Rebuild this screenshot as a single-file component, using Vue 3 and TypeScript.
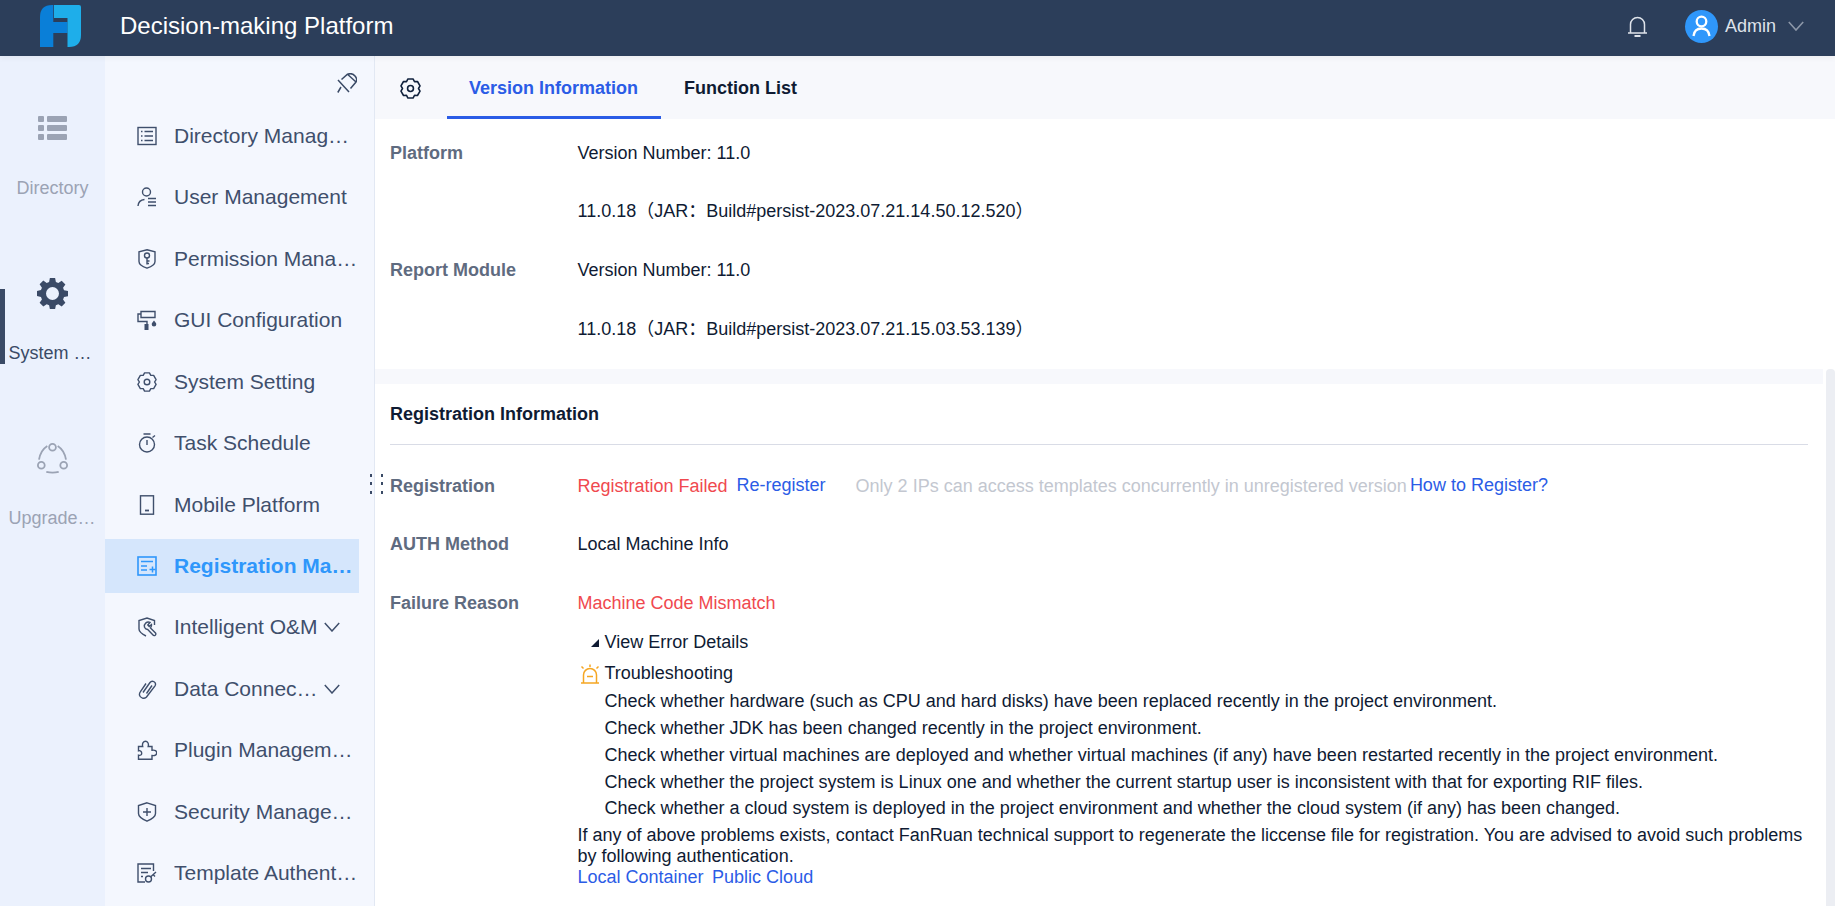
<script setup lang="ts">
interface NavItem { label: string; icon: string; active?: boolean; caret?: boolean }
const navItems: NavItem[] = [
  { label: 'Directory Management', icon: 'dir' },
  { label: 'User Management', icon: 'user' },
  { label: 'Permission Management', icon: 'perm' },
  { label: 'GUI Configuration', icon: 'gui' },
  { label: 'System Setting', icon: 'gear' },
  { label: 'Task Schedule', icon: 'timer' },
  { label: 'Mobile Platform', icon: 'mobile' },
  { label: 'Registration Management', icon: 'reg', active: true },
  { label: 'Intelligent O&M', icon: 'om', caret: true },
  { label: 'Data Connection', icon: 'clip', caret: true },
  { label: 'Plugin Management', icon: 'plugin' },
  { label: 'Security Management', icon: 'shield' },
  { label: 'Template Authentication', icon: 'tpl' },
]
const checks = [
  'Check whether hardware (such as CPU and hard disks) have been replaced recently in the project environment.',
  'Check whether JDK has been changed recently in the project environment.',
  'Check whether virtual machines are deployed and whether virtual machines (if any) have been restarted recently in the project environment.',
  'Check whether the project system is Linux one and whether the current startup user is inconsistent with that for exporting RIF files.',
  'Check whether a cloud system is deployed in the project environment and whether the cloud system (if any) has been changed.',
]
function cog(): string {
  const pts: string[] = []
  for (let i = 0; i < 6; i++) {
    const base = -90 + i * 60
    const add = (deg: number, r: number) => {
      const a = ((base + deg) * Math.PI) / 180
      pts.push(`${(10 + r * Math.cos(a)).toFixed(2)} ${(10 + r * Math.sin(a)).toFixed(2)}`)
    }
    add(-15, 9.4)
    add(15, 9.4)
    add(30, 7.6)
  }
  return 'M' + pts.join('L') + 'z'
}
const gearPath = cog()
</script>

<template>
  <div class="page">
    <header class="topbar">
      <svg class="logo" viewBox="0 0 41 42">
        <path d="M0 12Q0 0 12 0h1.300v42H0z" fill="#0a7fd8" />
        <path d="M13 17h14.500v11H13z" fill="#0a7fd8" />
        <path d="M14 0h25q2 0 2 2v28q0 12-12 12h-1.500V13H14z" fill="#1eaeea" />
      </svg>
      <div class="brand">Decision-making Platform</div>
      <div class="top-right">
        <svg class="bell" viewBox="0 0 19 21" fill="none" stroke="#dfe3ea" stroke-width="1.500">
          <path d="M0 17h19M2.500 17V8.500a7 7 0 0 1 14 0V17" />
          <path d="M6.500 20h6" stroke-width="2" />
        </svg>
        <span class="avatar">
          <svg viewBox="0 0 33 33" fill="none" stroke="#fff" stroke-width="2.300">
            <circle cx="16.500" cy="11.500" r="4.800" />
            <path d="M8.500 26c.6-5 3.800-7.500 8-7.500s7.400 2.500 8 7.500" />
          </svg>
        </span>
        <span class="admin">Admin</span>
        <svg class="top-caret" viewBox="0 0 16 10" fill="none" stroke="#8d97a8" stroke-width="1.600"><path d="M.8 1L8 9l7.200-8" /></svg>
      </div>
    </header>

    <div class="body">
      <aside class="rail">
        <div class="rail-item muted">
          <span class="rail-box">
            <svg class="rail-list" viewBox="0 0 29 24" fill="#9ba3b4">
              <rect x="0" y="0" width="6" height="6" rx="1" /><rect x="9" y="0" width="20" height="6" rx="1" />
              <rect x="0" y="9" width="6" height="6" rx="1" /><rect x="9" y="9" width="20" height="6" rx="1" />
              <rect x="0" y="18" width="6" height="6" rx="1" /><rect x="9" y="18" width="20" height="6" rx="1" />
            </svg>
          </span>
          <span class="rail-label">Directory</span>
        </div>
        <div class="rail-item current">
          <i class="rail-bar"></i>
          <span class="rail-box">
            <svg class="rail-svg" viewBox="0 0 32 32">
              <path fill="#3a4a66" fill-rule="evenodd" d="M13.300 0h5.400l.8 4.200 2.500 1 3.500-2.400 3.800 3.800-2.400 3.500 1 2.500 4.100.8v5.400l-4.100.8-1 2.500 2.400 3.500-3.800 3.800-3.500-2.400-2.500 1-.8 4h-5.400l-.8-4-2.500-1-3.500 2.400-3.800-3.800 2.400-3.500-1-2.500L0 18.700v-5.400l4.100-.8 1-2.500-2.400-3.500 3.800-3.800 3.500 2.400 2.500-1zM16 9.300a6.700 6.700 0 1 0 0 13.400 6.700 6.700 0 0 0 0-13.400z" />
            </svg>
          </span>
          <span class="rail-label">System Management</span>
        </div>
        <div class="rail-item muted">
          <span class="rail-box">
            <svg class="rail-svg" viewBox="0 0 31 31" fill="none" stroke="#9ba3b4" stroke-width="1.800">
              <circle cx="15.500" cy="4.300" r="3.400" /><circle cx="4.300" cy="22.300" r="3.400" /><circle cx="26.700" cy="22.300" r="3.400" />
              <path d="M10.300 2.900C5.800 5.800 2.900 10.500 2 16.700M20.700 2.900c4.500 2.900 7.400 7.600 8.300 13.800M9.300 28.900c4 1 8.400 1 12.400 0" />
            </svg>
          </span>
          <span class="rail-label">Upgrade Center</span>
        </div>
      </aside>

      <nav class="side">
        <div class="pin-row">
          <svg class="pin" viewBox="0 0 20 20" fill="none" stroke="#3a4a66" stroke-width="1.500">
            <path d="M1 7l11 12M4.500 6.500L10.500 1.200Q15 -.5 18 3q2.800 3.200 1 6l-5.500 6.500M10.500 1.200L19 9M4 14L.8 19.500" />
          </svg>
        </div>
        <a v-for="item in navItems" :key="item.label" class="nav-item" :class="{ active: item.active }">
          <svg class="nav-icon" viewBox="0 0 20 20" fill="none" stroke="currentColor" stroke-width="1.400">
            <template v-if="item.icon === 'dir'">
              <rect x="1" y="1.500" width="18" height="17" />
              <path d="M4 5.500h1.500M7.500 5.500H16M4 10h1.500M7.500 10H16M4 14.500h1.500M7.500 14.500H16" />
            </template>
            <template v-else-if="item.icon === 'user'">
              <circle cx="9.500" cy="5" r="4" />
              <path d="M1 19c.3-3.800 2.800-6.200 6.500-6.500M11 11.500h8M11 15h8M11 18.500h8" />
            </template>
            <template v-else-if="item.icon === 'perm'">
              <path d="M10 .8l8 2v9.700c0 3-4.500 5.500-8 6.700-3.500-1.200-8-3.700-8-6.700V2.800z" />
              <circle cx="10" cy="6.500" r="2.500" />
              <path d="M10 9v6.500M10 12h2.500M10 14.500h2" />
            </template>
            <template v-else-if="item.icon === 'gui'">
              <path d="M4 1.500h14v6H4zM4 4H1v7.500h9V14" />
              <rect x="7.500" y="14" width="4" height="6" fill="currentColor" stroke="none" />
              <path d="M17 10.500c1.500 1.700 2.300 2.800 2.300 3.700a2.300 2.300 0 0 1-4.600 0c0-.9.800-2 2.300-3.700z" fill="currentColor" stroke="none" />
            </template>
            <template v-else-if="item.icon === 'gear'">
              <path :d="gearPath" stroke-linejoin="round" />
              <circle cx="10" cy="10" r="2.800" />
            </template>
            <template v-else-if="item.icon === 'timer'">
              <circle cx="10" cy="11.500" r="7.500" />
              <path d="M6.500 1h7M10 7v5M15.500 4.500l2.500-2" />
            </template>
            <template v-else-if="item.icon === 'mobile'">
              <rect x="3.500" y=".8" width="13" height="18.400" />
              <path d="M8 15.500h4" stroke-width="1.800" />
            </template>
            <template v-else-if="item.icon === 'reg'">
              <rect x="1" y="1" width="18" height="18" stroke-width="1.600" />
              <path d="M4 5.500h12M4 10h6M4 14h6M12.500 13.500h6M15.500 10.500v6" stroke-width="1.500" />
            </template>
            <template v-else-if="item.icon === 'om'">
              <path d="M17.500 8V3.500L10 1 2 3.500V12c0 3 4 5.500 7 7" />
              <path d="M13 5.500a4 4 0 0 0-5.500 4.800c.6 1.300 1.800 2.200 3.200 2.200l5.300 5.500a1.500 1.500 0 0 0 2.500-2l-5-5a4 4 0 0 0 1-3.500l-2.300 2L10.800 8z" />
            </template>
            <template v-else-if="item.icon === 'clip'">
              <path d="M6 13.500l7-10a3 3 0 0 1 5 3.300l-8.500 11.200c-2 2.500-6.500 1-7-1.800-.2-1.200 0-2.200.8-3.300L9 4.500" />
              <path d="M9.500 14.500l5.500-8" />
            </template>
            <template v-else-if="item.icon === 'plugin'">
              <path d="M1.500 6.500h4.200c-.8-3 .8-5.300 2.800-5.300s3.500 2.300 2.700 5.300H15v3.700c3-.5 4.700.7 4.700 2.600S18 16 15 15.500v3.700H1.500v-4c2 .5 3.200-.4 3.200-2S3.500 10.200 1.500 10.800z" />
            </template>
            <template v-else-if="item.icon === 'shield'">
              <path d="M10 .8l8.500 2.700v8c0 3.200-4.500 6-8.500 7.700-4-1.700-8.500-4.500-8.500-7.700v-8z" />
              <path d="M10 6v8M6 10h8" />
            </template>
            <template v-else-if="item.icon === 'tpl'">
              <path d="M8 19H1V1h15.500v7" />
              <path d="M4 5.500h10M4 9.500h7M4 13.500h2" />
              <circle cx="11.500" cy="16" r="3" />
              <path d="M13.500 14l5.500-5M16 11.500l2 2" />
            </template>
          </svg>
          <span class="nav-label">{{ item.label }}</span>
          <svg v-if="item.caret" class="nav-caret" viewBox="0 0 16 10" fill="none" stroke="currentColor" stroke-width="1.500"><path d="M.8 1L8 9l7.200-8" /></svg>
        </a>
      </nav>

      <main class="main">
        <span class="handle"><i></i><i></i></span>
        <div class="tabs">
          <svg class="tab-gear" viewBox="0 0 20 20" fill="none" stroke="#10203c" stroke-width="1.500">
            <path :d="gearPath" stroke-linejoin="round" /><circle cx="10" cy="10" r="2.800" />
          </svg>
          <div class="tab on">Version Information</div>
          <div class="tab">Function List</div>
        </div>

        <section class="versions">
          <div class="row">
            <div class="key">Platform</div>
            <div>Version Number: 11.0</div>
          </div>
          <div class="row">
            <div class="key"></div>
            <div>11.0.18（JAR：Build#persist-2023.07.21.14.50.12.520）</div>
          </div>
          <div class="row">
            <div class="key">Report Module</div>
            <div>Version Number: 11.0</div>
          </div>
          <div class="row">
            <div class="key"></div>
            <div>11.0.18（JAR：Build#persist-2023.07.21.15.03.53.139）</div>
          </div>
        </section>

        <div class="scroll-wrap">
          <div class="scroll-pane">
            <div class="strip"></div>
            <section class="reg">
              <h2 class="reg-title">Registration Information</h2>
              <div class="row">
                <div class="key">Registration</div>
                <div class="inline">
                  <span class="red">Registration Failed</span>
                  <span class="link re">Re-register</span>
                  <span class="grey">Only 2 IPs can access templates concurrently in unregistered version</span>
                  <span class="link how">How to Register?</span>
                </div>
              </div>
              <div class="row">
                <div class="key">AUTH Method</div>
                <div>Local Machine Info</div>
              </div>
              <div class="row">
                <div class="key">Failure Reason</div>
                <div class="red">Machine Code Mismatch</div>
              </div>
              <div class="details">
                <div class="toggle"><span class="tri"></span>View Error Details</div>
                <div class="trouble">
                  <svg class="alarm" viewBox="0 0 20 20" fill="none" stroke="#f5a623" stroke-width="1.500">
                    <path d="M1 19h18M3.500 19V11a6.500 6.500 0 0 1 13 0v8M7 12.500h6M10 .5v2.500M1.500 2.500l2 2M18.500 2.500l-2 2" />
                  </svg>
                  Troubleshooting
                </div>
                <div v-for="c in checks" :key="c" class="check">{{ c }}</div>
              </div>
              <p class="advice">If any of above problems exists, contact FanRuan technical support to regenerate the liccense file for registration. You are advised to avoid such problems by following authentication.</p>
              <div class="links"><span class="link">Local Container</span><span class="link">Public Cloud</span></div>
            </section>
          </div>
          <div class="scrollbar"></div>
        </div>
      </main>
    </div>
  </div>
</template>

<style>
html, body { margin: 0; padding: 0; background: #fff; overflow: hidden; }
</style>

<style scoped>
.page {
  width: 1835px;
  height: 906px;
  display: flex;
  flex-direction: column;
  overflow: hidden;
  font-family: "Liberation Sans", "Noto Sans CJK SC", Arial, sans-serif;
  font-size: 18px;
  color: #0f1b33;
}
.topbar {
  height: 56px;
  flex: none;
  display: flex;
  align-items: center;
  background: #2c3e5a;
  color: #fff;
  position: relative;
  z-index: 2;
  box-shadow: 0 2px 6px rgba(0, 0, 0, .05);
}
.logo { width: 41px; height: 42px; margin-left: 40px; margin-top: -4px; }
.brand { margin-left: 39px; font-size: 24px; margin-top: -4px; }
.top-right { margin-left: auto; display: flex; align-items: center; padding: 0 31px 4px 0; }
.bell { width: 19px; height: 21px; }
.avatar { width: 33px; height: 33px; border-radius: 50%; background: #2f97fb; margin-left: 38px; display: flex; }
.avatar svg { width: 33px; height: 33px; }
.admin { margin-left: 7px; color: #dfe3ea; }
.top-caret { width: 16px; height: 10px; margin-left: 12px; }

.body { flex: 1; display: flex; min-height: 0; }
.rail {
  width: 105px;
  flex: none;
  background: #ebf1fd;
  padding-top: 56px;
  box-sizing: border-box;
  display: flex;
  flex-direction: column;
  gap: 78px;
}
.rail-item {
  position: relative;
  display: flex;
  flex-direction: column;
  align-items: center;
}
.rail-box { height: 32px; display: flex; align-items: center; justify-content: center; }
.rail-label {
  margin-top: 34px;
  line-height: 21px;
  max-width: 88px;
  overflow: hidden;
  text-overflow: ellipsis;
  white-space: nowrap;
}
.rail-item.muted { color: #9ba3b4; }
.rail-item.current { color: #3a4a66; }
.rail-bar {
  position: absolute;
  left: 0;
  top: 12px;
  height: 75px;
  width: 5px;
  background: #3a4a66;
}
.rail-list { width: 29px; height: 24px; }
.rail-svg { width: 31px; height: 31px; }

.side {
  width: 269px;
  flex: none;
  background: #f4f7fe;
  box-sizing: border-box;
}
.pin-row { height: 53px; display: flex; justify-content: flex-end; padding: 17px 17px 0 0; box-sizing: border-box; }
.pin { width: 20px; height: 20px; }
.nav-item {
  width: 254px;
  height: 54px;
  margin-bottom: 7.430px;
  display: flex;
  align-items: center;
  padding: 0 0 0 32px;
  box-sizing: border-box;
  color: #3f4f6c;
  font-size: 21px;
}
.nav-item.active { background: #d5e6fc; color: #2f97fb; font-weight: 700; }
.nav-icon { width: 20px; height: 20px; flex: none; }
.nav-label {
  margin-left: 17px;
  flex: 1;
  min-width: 0;
  overflow: hidden;
  text-overflow: ellipsis;
  white-space: nowrap;
}
.nav-caret { width: 16px; height: 10px; flex: none; margin: 0 19px 0 3px; }

.main {
  flex: 1;
  min-width: 0;
  position: relative;
  display: flex;
  flex-direction: column;
  border-left: 1px solid #e2e8f3;
  background: #fff;
}
.handle { position: absolute; left: -5px; top: 418px; display: flex; gap: 9px; z-index: 1; }
.handle i {
  display: block;
  width: 2px;
  height: 20px;
  background: repeating-linear-gradient(#3a4a66 0 3px, transparent 3px 8.500px);
}
.tabs {
  height: 63px;
  flex: none;
  display: flex;
  background: #f7f8fc;
  align-items: stretch;
  padding-left: 25px;
}
.tab-gear { width: 21px; height: 21px; align-self: center; margin: 2px 26px 0 0; }
.tab {
  padding: 2px 23px 0;
  display: flex;
  align-items: center;
  font-weight: 700;
  box-sizing: border-box;
  color: #0f1b33;
}
.tab.on { color: #2b5ce6; border-bottom: 3px solid #2b5ce6; padding: 5px 23px 0 22px; }
.versions { flex: none; padding: 5px 0 0 15px; height: 250px; box-sizing: border-box; }
.row { display: flex; height: 58.600px; align-items: center; }
.row > div { line-height: 21px; }
.key { width: 187.500px; flex: none; font-weight: 700; color: #5f6b80; }

.scroll-wrap { flex: 1; min-height: 0; display: flex; }
.scroll-pane { flex: 1; min-width: 0; overflow: hidden; }
.scrollbar { width: 9px; margin-left: 3px; background: #eceef3; border-radius: 4px 4px 0 0; flex: none; }
.strip { height: 15px; background: #f7f8fc; }
.reg { padding: 0 15px; }
.reg-title {
  margin: 0 0 12px;
  height: 61px;
  line-height: 60px;
  font-size: 18px;
  font-weight: 700;
  color: #0f1b33;
  box-sizing: border-box;
  border-bottom: 1px solid #d9dce6;
}
.inline { white-space: nowrap; }
.red { color: #f0494f; }
.link { color: #2b5ce6; }
.grey { color: #c3c7d0; margin-left: 30px; margin-right: 3px; }
.re { margin-left: 9px; position: relative; top: -1px; }
.how { position: relative; top: -1px; }
.details { margin-left: 187.500px; margin-top: -2.500px; }
.toggle { height: 25px; line-height: 25px; }
.tri {
  display: inline-block;
  width: 0;
  height: 0;
  border-left: 8px solid transparent;
  border-bottom: 8px solid #0f1b33;
  margin: 0 6px 2px 13px;
  vertical-align: middle;
}
.trouble { height: 29px; margin-top: 4px; display: flex; align-items: center; gap: 2px; }
.alarm { width: 20px; height: 20px; margin: 0 3px 0 2px; }
.check { padding-left: 27px; line-height: 26.800px; white-space: nowrap; }
.advice { margin: 3px 0 0 187.500px; line-height: 21px; }
.links { margin-left: 187.500px; line-height: 21px; display: flex; gap: 8.500px; }
</style>
